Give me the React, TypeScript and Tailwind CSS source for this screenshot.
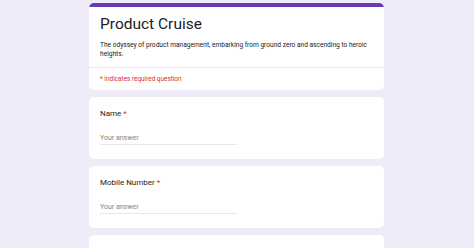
import React from "react";

function QuestionCard({ label }: { label: string }) {
  return (
    <div className="h-[62px] bg-white rounded-[5px] pl-[11px] pt-[12px]">
      <div className="text-[8px] leading-[10px] text-[#202124]">
        {label} <span className="text-[#d93025]">*</span>
      </div>
      <div className="mt-[15px] w-[137px] border-b border-[#e6e6e6] pb-[1px] text-[7px] leading-[9px] text-[#80868b]">
        Your answer
      </div>
    </div>
  );
}

export default function App() {
  return (
    <div
      className="w-[474px] h-[248px] overflow-hidden bg-[#f0ebf8]"
      style={{ fontFamily: "Roboto, 'Liberation Sans', sans-serif" }}
    >
      <div className="ml-[89px] w-[295px] pt-[3px] flex flex-col gap-[7px]">
        <div className="bg-white rounded-[5px] overflow-hidden">
          <div className="h-[4px] bg-[#673ab7]" />
          <div className="h-[61px] pl-[11px] pr-[10px] pt-[7px] border-b border-[#ececec]">
            <div className="text-[15.5px] leading-[20px] text-[#202124]">
              Product Cruise
            </div>
            <div className="mt-[7px] text-[6.6px] leading-[9px] text-[#202124]">
              The odyssey of product management, embarking from ground zero and ascending to heroic heights.
            </div>
          </div>
          <div className="h-[22px] pl-[11px] pt-[1px] flex items-center text-[6.4px] text-[#d93025]">
            * Indicates required question
          </div>
        </div>
        <QuestionCard label="Name" />
        <QuestionCard label="Mobile Number" />
        <div className="h-[62px] bg-white rounded-[5px]" />
      </div>
    </div>
  );
}
